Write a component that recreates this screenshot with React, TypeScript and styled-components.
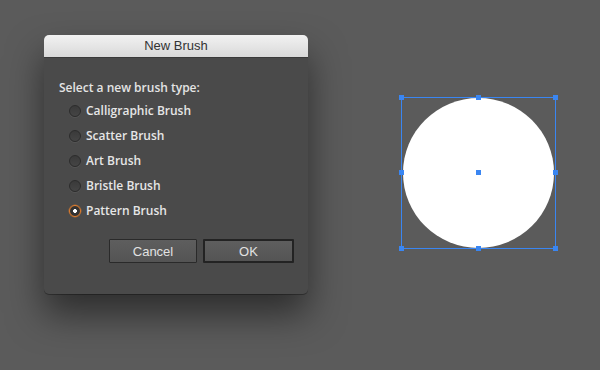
import React from "react";
import styled, { createGlobalStyle } from "styled-components";

const GlobalStyle = createGlobalStyle`
  html, body {
    margin: 0;
    padding: 0;
    background: #5b5b5b;
  }
  body {
    font-family: "Open Sans", "Liberation Sans", sans-serif;
  }
`;

const brushTypes = [
  "Calligraphic Brush",
  "Scatter Brush",
  "Art Brush",
  "Bristle Brush",
  "Pattern Brush",
];

export default function App() {
  const selected = "Pattern Brush";

  return (
    <>
      <GlobalStyle />
      <Page>
        <Dialog>
          <TitleBar>New Brush</TitleBar>
          <Body>
            <Prompt>Select a new brush type:</Prompt>
            <RadioList>
              {brushTypes.map((type) => (
                <RadioRow key={type}>
                  <Radio $checked={type === selected} />
                  <RadioLabel>{type}</RadioLabel>
                </RadioRow>
              ))}
            </RadioList>
            <ButtonRow>
              <Button>Cancel</Button>
              <Button $primary>OK</Button>
            </ButtonRow>
          </Body>
        </Dialog>
        <Selection>
          <Circle />
          <Handle style={{ left: -3, top: -3 }} />
          <Handle style={{ left: "calc(50% - 3px)", top: -3 }} />
          <Handle style={{ right: -3, top: -3 }} />
          <Handle style={{ left: -3, top: "calc(50% - 3px)" }} />
          <Handle style={{ left: "calc(50% - 3px)", top: "calc(50% - 3px)" }} />
          <Handle style={{ right: -3, top: "calc(50% - 3px)" }} />
          <Handle style={{ left: -3, bottom: -3 }} />
          <Handle style={{ left: "calc(50% - 3px)", bottom: -3 }} />
          <Handle style={{ right: -3, bottom: -3 }} />
        </Selection>
      </Page>
    </>
  );
}

const Page = styled.div`
  width: 600px;
  height: 370px;
  box-sizing: border-box;
  padding: 35px 0 0 44px;
  display: flex;
  align-items: flex-start;
  overflow: hidden;
`;

const Dialog = styled.div`
  width: 264px;
  height: 259px;
  display: flex;
  flex-direction: column;
  background: #4a4a4a;
  border-radius: 5px;
  box-shadow: 0 1px 0 rgba(0, 0, 0, 0.3), 0 20px 36px rgba(0, 0, 0, 0.5);
  overflow: hidden;
`;

const TitleBar = styled.div`
  height: 22px;
  line-height: 22px;
  text-align: center;
  font-family: "Liberation Sans", Arial, sans-serif;
  font-size: 13px;
  color: #333;
  background: linear-gradient(#f2f2f2, #d9d9d9);
  border-bottom: 1px solid #3a3a3a;
`;

const Body = styled.div`
  flex: 1;
  display: flex;
  flex-direction: column;
  padding: 22px 14px 0 15px;
`;

const Prompt = styled.div`
  font-size: 12px;
  font-weight: 600;
  line-height: 16px;
  color: #e4e4e4;
`;

const RadioList = styled.div`
  display: flex;
  flex-direction: column;
  margin: 2px 0 0 10px;
`;

const RadioRow = styled.div`
  height: 25px;
  display: flex;
  align-items: center;
  gap: 5px;
`;

const Radio = styled.span<{ $checked?: boolean }>`
  width: 10px;
  height: 10px;
  border-radius: 50%;
  display: grid;
  place-items: center;
  border: 1px solid ${(p) => (p.$checked ? "#e47e2c" : "#2c2c2c")};
  background: ${(p) =>
    p.$checked
      ? "radial-gradient(circle, #fff 0 1.6px, #333 2.2px)"
      : "linear-gradient(#3a3a3a, #454545)"};
  box-shadow: ${(p) =>
    p.$checked ? "0 0 0 0.5px rgba(228,126,44,0.6)" : "0 1px 0 rgba(255,255,255,0.06)"};
`;

const RadioLabel = styled.span`
  font-size: 12px;
  font-weight: 600;
  color: #e6e6e6;
`;

const ButtonRow = styled.div`
  display: flex;
  justify-content: flex-end;
  gap: 6px;
  margin-top: 16px;
`;

const Button = styled.div<{ $primary?: boolean }>`
  width: ${(p) => (p.$primary ? "91px" : "88px")};
  height: 24px;
  box-sizing: border-box;
  display: flex;
  align-items: center;
  justify-content: center;
  font-family: "Liberation Sans", Arial, sans-serif;
  font-size: 13px;
  color: #e2e2e2;
  background: linear-gradient(#5e5e5e, #545454);
  border: ${(p) => (p.$primary ? "2px solid #232323" : "1px solid #2a2a2a")};
  border-radius: 1px;
`;

const Selection = styled.div`
  position: relative;
  width: 153px;
  height: 150px;
  margin: 62px 0 0 93px;
  border: 1px solid #3a86f2;
  box-sizing: content-box;
`;

const Circle = styled.div`
  position: absolute;
  inset: 0 1px;
  border-radius: 50%;
  background: #fff;
`;

const Handle = styled.span`
  position: absolute;
  width: 5px;
  height: 5px;
  background: #3a86f2;
`;
